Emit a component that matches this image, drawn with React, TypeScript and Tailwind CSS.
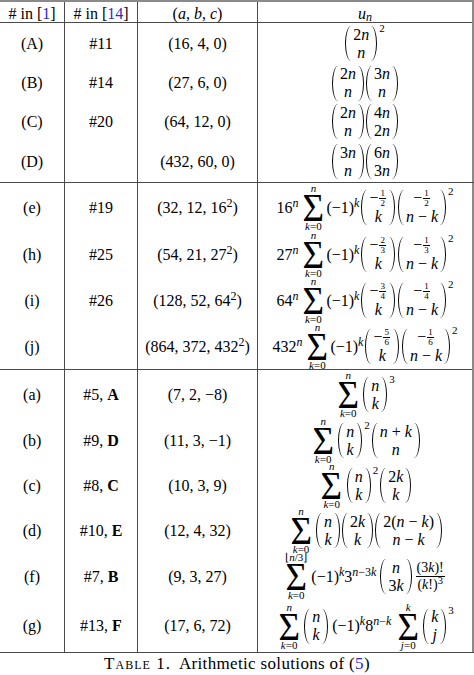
import React from 'react';

type N = React.ReactNode;

const blue = 'text-[#2a2ad0]';

function I({ children }: { children: N }) {
  return <span className="italic">{children}</span>;
}

function Paren({ side }: { side: 'l' | 'r' }) {
  const shape =
    side === 'l'
      ? 'border-l-[1.4px] rounded-l-[100%_50%] mr-[1px]'
      : 'border-r-[1.4px] rounded-r-[100%_50%] ml-[1px]';
  return <span className={`inline-block w-[6px] h-[35px] border-black ${shape}`} />;
}

function Binom({ t, b, sup }: { t: N; b: N; sup?: string }) {
  return (
    <span className="inline-flex items-center">
      <Paren side="l" />
      <span className="flex flex-col items-center leading-[18px] px-[1px] whitespace-nowrap">
        <span>{t}</span>
        <span>{b}</span>
      </span>
      <Paren side="r" />
      {sup && <span className="self-start text-[11px] leading-none ml-[2px] -mt-[3px]">{sup}</span>}
    </span>
  );
}

function Sum({ top, bot }: { top: N; bot: N }) {
  return (
    <span className="inline-flex flex-col items-center mx-[2px]">
      <span className="text-[11px] leading-[11px] whitespace-nowrap">{top}</span>
      <span className="h-[27px] w-[22px] flex items-center justify-center">
        <span className="text-[39px] leading-[27px] scale-x-[0.95]">Σ</span>
      </span>
      <span className="text-[11px] leading-[11px] whitespace-nowrap">{bot}</span>
    </span>
  );
}

function TinyFrac({ n, d }: { n: N; d: N }) {
  return (
    <span className="inline-flex flex-col items-center align-middle text-[9px] leading-[9px] mx-[1px]">
      <span className="px-[1px]">{n}</span>
      <span className="self-stretch h-px bg-black" />
      <span className="px-[1px]">{d}</span>
    </span>
  );
}

function Frac({ n, d }: { n: N; d: N }) {
  return (
    <span className="inline-flex flex-col items-center text-[14px] leading-[16px] mx-[2px]">
      <span className="px-[1px] whitespace-nowrap">{n}</span>
      <span className="self-stretch h-px bg-black" />
      <span className="px-[1px] whitespace-nowrap">{d}</span>
    </span>
  );
}

const kz = (
  <>
    <I>k</I>=0
  </>
);
const nk = (
  <>
    <I>n</I> − <I>k</I>
  </>
);
const mk = (
  <span className="whitespace-nowrap mr-[2px]">
    (−1)<sup><I>k</I></sup>
  </span>
);

function SumRow({ base, p, q }: { base: string; p: string; q: string }) {
  return (
    <span className="inline-flex items-center">
      <span className="mr-[2px] whitespace-nowrap">
        {base}
        <sup>
          <I>n</I>
        </sup>
      </span>
      <Sum top={<I>n</I>} bot={kz} />
      {mk}
      <Binom t={<>−<TinyFrac n={p} d={q} /></>} b={<I>k</I>} />
      <span className="w-[3px]" />
      <Binom t={<>−<TinyFrac n="1" d={q} /></>} b={nk} sup="2" />
    </span>
  );
}

const n2 = (s: string) => (
  <>
    {s}
    <I>n</I>
  </>
);

type Row = { h: string; c1: N; c2: N; c3: N; c4: N };

const group1: Row[] = [
  { h: 'h-[41px]', c1: '(A)', c2: '#11', c3: '(16, 4, 0)', c4: <Binom t={n2('2')} b={<I>n</I>} sup="2" /> },
  {
    h: 'h-[38px]',
    c1: '(B)',
    c2: '#14',
    c3: '(27, 6, 0)',
    c4: (
      <span className="inline-flex items-center gap-[2px]">
        <Binom t={n2('2')} b={<I>n</I>} />
        <Binom t={n2('3')} b={<I>n</I>} />
      </span>
    ),
  },
  {
    h: 'h-[39px]',
    c1: '(C)',
    c2: '#20',
    c3: '(64, 12, 0)',
    c4: (
      <span className="inline-flex items-center gap-[2px]">
        <Binom t={n2('2')} b={<I>n</I>} />
        <Binom t={n2('4')} b={n2('2')} />
      </span>
    ),
  },
  {
    h: 'h-[42px] border-b',
    c1: '(D)',
    c2: '',
    c3: '(432, 60, 0)',
    c4: (
      <span className="inline-flex items-center gap-[2px]">
        <Binom t={n2('3')} b={<I>n</I>} />
        <Binom t={n2('6')} b={n2('3')} />
      </span>
    ),
  },
];

const sq = (s: string) => (
  <>
    {s}
    <sup>2</sup>
  </>
);

const group2: Row[] = [
  { h: 'h-[47px]', c1: '(e)', c2: '#19', c3: <>(32, 12, {sq('16')})</>, c4: <SumRow base="16" p="1" q="2" /> },
  { h: 'h-[46px]', c1: '(h)', c2: '#25', c3: <>(54, 21, {sq('27')})</>, c4: <SumRow base="27" p="2" q="3" /> },
  { h: 'h-[46px]', c1: '(i)', c2: '#26', c3: <>(128, 52, {sq('64')})</>, c4: <SumRow base="64" p="3" q="4" /> },
  {
    h: 'h-[48px] border-b',
    c1: '(j)',
    c2: '',
    c3: <>(864, 372, {sq('432')})</>,
    c4: <SumRow base="432" p="5" q="6" />,
  },
];

const sumN = <Sum top={<I>n</I>} bot={kz} />;
const bnk = (sup?: string) => <Binom t={<I>n</I>} b={<I>k</I>} sup={sup} />;
const bold = (s: string) => <span className="font-bold">{s}</span>;

const group3: Row[] = [
  {
    h: 'h-[46px]',
    c1: '(a)',
    c2: <>#5, {bold('A')}</>,
    c3: '(7, 2, −8)',
    c4: (
      <span className="inline-flex items-center gap-[2px]">
        {sumN}
        {bnk('3')}
      </span>
    ),
  },
  {
    h: 'h-[45px]',
    c1: '(b)',
    c2: <>#9, {bold('D')}</>,
    c3: '(11, 3, −1)',
    c4: (
      <span className="inline-flex items-center gap-[2px]">
        {sumN}
        {bnk('2')}
        <Binom t={<><I>n</I> + <I>k</I></>} b={<I>n</I>} />
      </span>
    ),
  },
  {
    h: 'h-[45px]',
    c1: '(c)',
    c2: <>#8, {bold('C')}</>,
    c3: '(10, 3, 9)',
    c4: (
      <span className="inline-flex items-center gap-[2px]">
        {sumN}
        {bnk('2')}
        <Binom t={<>2<I>k</I></>} b={<I>k</I>} />
      </span>
    ),
  },
  {
    h: 'h-[46px]',
    c1: '(d)',
    c2: <>#10, {bold('E')}</>,
    c3: '(12, 4, 32)',
    c4: (
      <span className="inline-flex items-center gap-[2px]">
        {sumN}
        {bnk()}
        <Binom t={<>2<I>k</I></>} b={<I>k</I>} />
        <Binom t={<>2(<I>n</I> − <I>k</I>)</>} b={nk} />
      </span>
    ),
  },
  {
    h: 'h-[48px]',
    c1: '(f)',
    c2: <>#7, {bold('B')}</>,
    c3: '(9, 3, 27)',
    c4: (
      <span className="inline-flex items-center gap-[2px]">
        <Sum top={<>⌊<I>n</I>/3⌋</>} bot={kz} />
        <span className="whitespace-nowrap mr-[2px]">
          (−1)<sup><I>k</I></sup>3<sup><I>n</I>−3<I>k</I></sup>
        </span>
        <Binom t={<I>n</I>} b={<>3<I>k</I></>} />
        <Frac
          n={<>(3<I>k</I>)!</>}
          d={
            <>
              (<I>k</I>!)<sup>3</sup>
            </>
          }
        />
      </span>
    ),
  },
  {
    h: 'h-[53px] border-b',
    c1: '(g)',
    c2: <>#13, {bold('F')}</>,
    c3: '(17, 6, 72)',
    c4: (
      <span className="inline-flex items-center gap-[2px]">
        {sumN}
        {bnk()}
        <span className="whitespace-nowrap mx-[2px]">
          (−1)<sup><I>k</I></sup>8<sup><I>n</I>−<I>k</I></sup>
        </span>
        <Sum top={<I>k</I>} bot={<><I>j</I>=0</>} />
        <Binom t={<I>k</I>} b={<I>j</I>} sup="3" />
      </span>
    ),
  },
];

function TableRow({ r }: { r: Row }) {
  const cell = 'flex items-center justify-center border-[#4a4a4a]';
  return (
    <div className={`grid grid-cols-[65px_73px_120px_216px] border-[#4a4a4a] ${r.h}`}>
      <div className={`${cell} border-r`}>
        <span>{r.c1}</span>
      </div>
      <div className={`${cell} border-r-[1.5px]`}>
        <span className="whitespace-nowrap">{r.c2}</span>
      </div>
      <div className={`${cell} border-r`}>
        <span className="whitespace-nowrap">{r.c3}</span>
      </div>
      <div className={`${cell} border-r-2 border-r-[#8a8a8a]`}>{r.c4}</div>
    </div>
  );
}

export default function App() {
  return (
    <div className="w-[474px] h-[675px] bg-white overflow-hidden text-black text-[16px] [font-family:'Liberation_Serif',serif]">
      <div className="border-t-2 border-[#8a8a8a]">
        <TableRow
          r={{
            h: 'h-[21px] border-b',
            c1: (
              <>
                # in [<span className={blue}>1</span>]
              </>
            ),
            c2: (
              <>
                # in [<span className={blue}>14</span>]
              </>
            ),
            c3: (
              <>
                (<I>a</I>, <I>b</I>, <I>c</I>)
              </>
            ),
            c4: (
              <>
                <I>u</I>
                <sub>
                  <I>n</I>
                </sub>
              </>
            ),
          }}
        />
        {group1.map((r, i) => (
          <TableRow key={'a' + i} r={r} />
        ))}
        {group2.map((r, i) => (
          <TableRow key={'b' + i} r={r} />
        ))}
        {group3.map((r, i) => (
          <TableRow key={'c' + i} r={r} />
        ))}
      </div>
      <div className="h-[22px] flex items-center justify-center text-[17px] tracking-[0.02em]">
        <span className="[font-variant-caps:small-caps] tracking-[0.06em]">Table 1.</span>
        <span className="ml-[8px]">
          Arithmetic solutions of (<span className={blue}>5</span>)
        </span>
      </div>
    </div>
  );
}
